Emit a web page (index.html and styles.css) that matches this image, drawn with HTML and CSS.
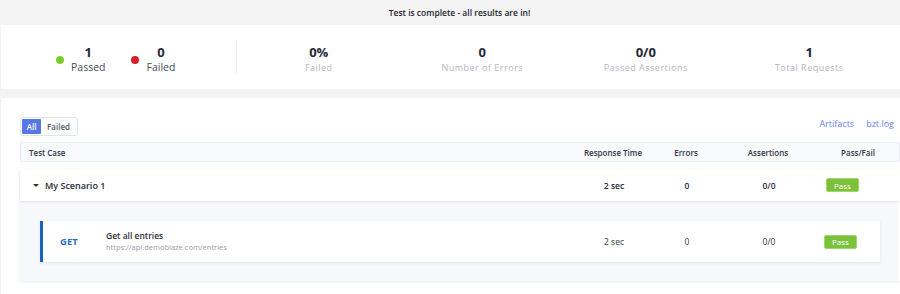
FILE: index.html
```html
<!DOCTYPE html>
<html>
<head>
<meta charset="utf-8">
<link rel="stylesheet" href="styles.css">
</head>
<body>
<div class="banner">Test is complete - all results are in!</div>

<section class="stats">
  <div class="stats-main">
    <div class="stat-dot">
      <span class="dot dot-green"></span>
      <div class="stat-text">
        <div class="num">1</div>
        <div class="lbl-dark">Passed</div>
      </div>
    </div>
    <div class="stat-dot">
      <span class="dot dot-red"></span>
      <div class="stat-text">
        <div class="num">0</div>
        <div class="lbl-dark">Failed</div>
      </div>
    </div>
  </div>
  <div class="divider"></div>
  <div class="stats-cols">
    <div class="stat-col"><div class="num">0%</div><div class="lbl">Failed</div></div>
    <div class="stat-col"><div class="num">0</div><div class="lbl">Number of Errors</div></div>
    <div class="stat-col"><div class="num">0/0</div><div class="lbl">Passed Assertions</div></div>
    <div class="stat-col"><div class="num">1</div><div class="lbl">Total Requests</div></div>
  </div>
</section>

<section class="panel">
  <div class="toolbar">
    <div class="filter">
      <span class="filter-btn active">All</span>
      <span class="filter-btn">Failed</span>
    </div>
    <div class="links">
      <a class="link">Artifacts</a>
      <a class="link">bzt.log</a>
    </div>
  </div>

  <div class="thead">
    <div class="th th-name">Test Case</div>
    <div class="th">Response Time</div>
    <div class="th">Errors</div>
    <div class="th">Assertions</div>
    <div class="th">Pass/Fail</div>
  </div>

  <div class="scenario">
    <div class="scenario-row">
      <div class="sc-name"><span class="caret"></span>My Scenario 1</div>
      <div class="cell bold">2 sec</div>
      <div class="cell bold">0</div>
      <div class="cell bold">0/0</div>
      <div class="cell-badge"><span class="badge">Pass</span></div>
    </div>
    <div class="children">
      <div class="req">
        <div class="req-name">
          <span class="method">GET</span>
          <div class="req-text">
            <div class="req-title">Get all entries</div>
            <div class="req-url">https://api.demoblaze.com/entries</div>
          </div>
        </div>
        <div class="cell">2 sec</div>
        <div class="cell">0</div>
        <div class="cell">0/0</div>
        <div class="cell-badge req-badge"><span class="badge">Pass</span></div>
      </div>
    </div>
  </div>
</section>
</body>
</html>
```

FILE: styles.css
```css
* { box-sizing: border-box; }
html, body { margin: 0; padding: 0; }
body {
  background: #f3f3f3;
  font-family: "Open Sans", "Noto Sans", sans-serif;
  color: #2a2c3a;
  width: 900px;
  height: 294px;
  overflow: hidden;
}

.banner {
  height: 25px;
  display: flex;
  align-items: center;
  justify-content: center;
  padding-left: 19px;
  font-size: 8.5px;
  font-weight: 600;
  color: #1f2230;
}

.stats {
  height: 64px;
  margin-left: 1px;
  background: #fff;
  display: flex;
  align-items: center;
}
.stats-main {
  width: 235px;
  display: flex;
  padding-left: 55px;
  gap: 26px;
  margin-top: 6px;
}
.stat-dot {
  display: flex;
  align-items: center;
  gap: 7px;
}
.dot {
  width: 8px;
  height: 8px;
  border-radius: 50%;
  display: block;
}
.dot-green { background: #7ccb2d; }
.dot-red { background: #d71f26; }
.stat-text {
  display: flex;
  flex-direction: column;
  align-items: center;
}
.num {
  font-size: 13px;
  font-weight: 700;
  color: #262838;
  line-height: 15px;
}
.lbl-dark {
  font-size: 10.5px;
  color: #4a4c5c;
  line-height: 15px;
}
.divider {
  width: 1px;
  height: 32px;
  background: #ececec;
}
.stats-cols {
  width: 654px;
  display: grid;
  grid-template-columns: repeat(4, 1fr);
  margin-top: 6px;
}
.stat-col {
  display: flex;
  flex-direction: column;
  align-items: center;
}
.lbl {
  font-size: 9px;
  letter-spacing: 0.5px;
  color: #b4b6bf;
  line-height: 15px;
}

.panel {
  margin: 9px 0 0 1px;
  background: #fff;
  height: 200px;
  padding: 19px 0 0 19px;
}
.toolbar {
  display: flex;
  justify-content: space-between;
  align-items: flex-start;
  padding-right: 6px;
}
.filter {
  display: flex;
  border: 1px solid #dfe5ef;
  border-radius: 3px;
  padding: 1px;
  height: 19px;
  width: 58px;
}
.filter-btn {
  font-size: 8px;
  font-weight: 600;
  color: #5a5c68;
  display: flex;
  align-items: center;
  justify-content: center;
  padding: 0 6px;
  height: 15px;
}
.filter-btn.active {
  background: #5677e6;
  color: #fff;
  width: 20px;
  padding: 0;
  border-radius: 1px;
}
.links {
  display: flex;
  gap: 12px;
  margin-top: 1px;
}
.link {
  font-size: 9px;
  color: #6c82ee;
  line-height: 12px;
}

.thead {
  margin-top: 6px;
  height: 20px;
  background: #f8fafd;
  border: 1px solid #e7ecf4;
  border-radius: 2px;
  display: grid;
  grid-template-columns: 1fr 80px 66px 98px 82px;
  align-items: center;
}
.th {
  font-size: 8px;
  font-weight: 600;
  color: #33353f;
  text-align: center;
}
.th-name {
  text-align: left;
  padding-left: 8px;
}

.scenario {
  margin-top: 7px;
  box-shadow: 0 1px 3px rgba(40, 60, 100, 0.10);
}
.scenario-row {
  height: 32px;
  background: #fff;
  display: grid;
  grid-template-columns: 1fr 80px 66px 98px 82px;
  align-items: center;
  box-shadow: 0 1px 2px rgba(40, 60, 100, 0.10);
  position: relative;
}
.sc-name {
  display: flex;
  align-items: center;
  padding-left: 13px;
  font-size: 9px;
  font-weight: 600;
  color: #262838;
}
.caret {
  width: 0;
  height: 0;
  border-left: 3px solid transparent;
  border-right: 3px solid transparent;
  border-top: 3px solid #333;
  margin-right: 6px;
}
.cell {
  font-size: 8.5px;
  color: #33353f;
  text-align: center;
}
.cell.bold {
  font-weight: 600;
  color: #262838;
}
.cell-badge {
  padding-left: 8px;
  display: flex;
}
.req-badge { padding-left: 6px; }
.badge {
  width: 33px;
  height: 14px;
  background: #7bc13a;
  border: 1px solid #a2d66f;
  border-radius: 2px;
  color: #fff;
  font-size: 8px;
  display: flex;
  align-items: center;
  justify-content: center;
}

.children {
  background: #f6f8fc;
  padding: 20px 18px 19px 20px;
  margin-right: 2px;
}
.req {
  height: 41px;
  background: #fff;
  border-left: 3px solid #1a63bd;
  box-shadow: 0 1px 3px rgba(40, 60, 100, 0.10);
  display: grid;
  grid-template-columns: 1fr 80px 66px 98px 62px;
  align-items: center;
}
.req-name {
  display: flex;
  align-items: center;
  padding-left: 17px;
}
.method {
  width: 46px;
  font-size: 9.5px;
  font-weight: 700;
  color: #2e6fbd;
}
.req-text {
  display: flex;
  flex-direction: column;
}
.req-title {
  font-size: 8.5px;
  font-weight: 600;
  color: #2a2c38;
  line-height: 12px;
}
.req-url {
  font-size: 7.5px;
  color: #9a9ca6;
  line-height: 11px;
}
```
